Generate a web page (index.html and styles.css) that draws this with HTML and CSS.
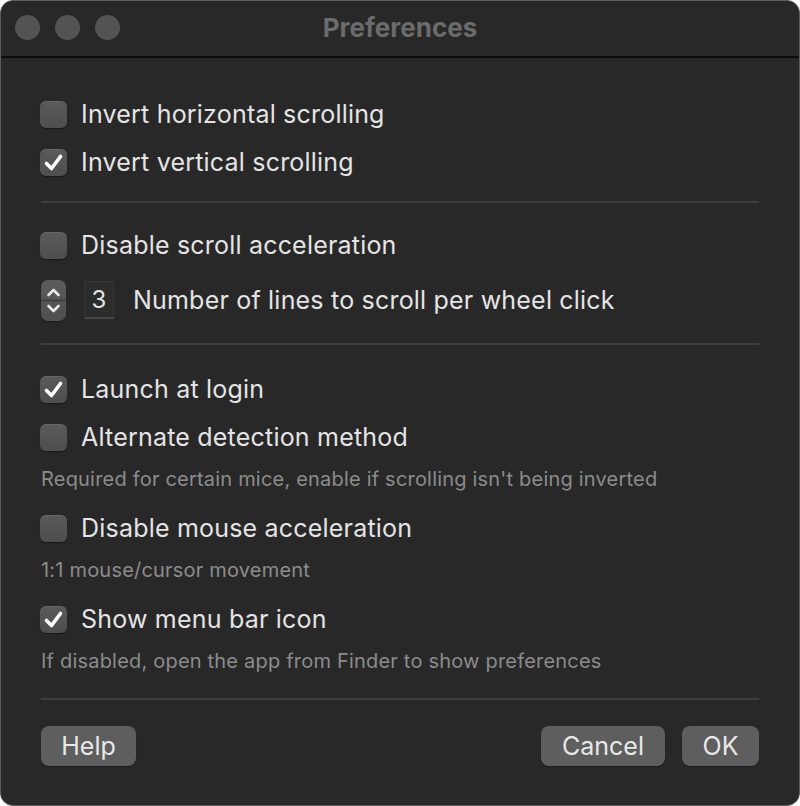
FILE: index.html
```html
<!DOCTYPE html>
<html lang="en">
<head>
    <meta charset="UTF-8">
    <meta name="viewport" content="width=device-width, initial-scale=1.0">
    <title>Preferences</title>
    <link rel="stylesheet" href="styles.css">
</head>
<body>
    <div class="window">
        <div class="titlebar">
            <div class="lights">
                <span class="light"></span>
                <span class="light"></span>
                <span class="light"></span>
            </div>
            <div class="title">Preferences</div>
        </div>

        <div class="content">
            <div class="section first">
                <label class="row">
                    <span class="box"></span>
                    <span class="label">Invert horizontal scrolling</span>
                </label>
                <label class="row">
                    <span class="box checked">
                        <svg viewBox="0 0 27 27" width="27" height="27"><path d="M6.5 14.5 L11.5 19.5 L20.5 7.5" /></svg>
                    </span>
                    <span class="label">Invert vertical scrolling</span>
                </label>
            </div>

            <hr class="sep">

            <div class="section">
                <label class="row">
                    <span class="box"></span>
                    <span class="label">Disable scroll acceleration</span>
                </label>
                <div class="row stepper-row">
                    <span class="stepper">
                        <svg viewBox="0 0 25 41" width="25" height="41">
                            <path class="chev" d="M7.5 15 L12.5 10 L17.5 15" />
                            <line class="mid" x1="0" y1="20.5" x2="25" y2="20.5" />
                            <path class="chev" d="M7.5 26 L12.5 31 L17.5 26" />
                        </svg>
                    </span>
                    <span class="number">3</span>
                    <span class="label">Number of lines to scroll per wheel click</span>
                </div>
            </div>

            <hr class="sep second">

            <div class="section">
                <label class="row">
                    <span class="box checked">
                        <svg viewBox="0 0 27 27" width="27" height="27"><path d="M6.5 14.5 L11.5 19.5 L20.5 7.5" /></svg>
                    </span>
                    <span class="label">Launch at login</span>
                </label>
                <label class="row">
                    <span class="box"></span>
                    <span class="label">Alternate detection method</span>
                </label>
                <p class="hint">Required for certain mice, enable if scrolling isn't being inverted</p>
                <label class="row">
                    <span class="box"></span>
                    <span class="label">Disable mouse acceleration</span>
                </label>
                <p class="hint">1:1 mouse/cursor movement</p>
                <label class="row">
                    <span class="box checked">
                        <svg viewBox="0 0 27 27" width="27" height="27"><path d="M6.5 14.5 L11.5 19.5 L20.5 7.5" /></svg>
                    </span>
                    <span class="label">Show menu bar icon</span>
                </label>
                <p class="hint">If disabled, open the app from Finder to show preferences</p>
            </div>

            <hr class="sep last">

            <div class="buttons">
                <button type="button" class="btn help">Help</button>
                <div class="right">
                    <button type="button" class="btn cancel">Cancel</button>
                    <button type="button" class="btn ok">OK</button>
                </div>
            </div>
        </div>
    </div>
</body>
</html>
```

FILE: styles.css
```css
html, body {
    margin: 0;
    padding: 0;
    background: #ffffff;
}
body {
    font-family: Inter, 'Noto Sans', sans-serif;
    width: 800px;
    height: 806px;
    overflow: hidden;
}
.window {
    box-sizing: border-box;
    width: 800px;
    height: 806px;
    background: #282828;
    border: 1px solid #5c5c5c;
    border-radius: 13px;
    overflow: hidden;
}
.titlebar {
    position: relative;
    height: 55px;
    border-bottom: 2px solid #0c0c0c;
    display: flex;
    align-items: center;
    justify-content: center;
}
.lights {
    position: absolute;
    left: 14px;
    top: 14px;
    display: flex;
    gap: 15px;
}
.light {
    width: 25px;
    height: 25px;
    border-radius: 50%;
    background: #545454;
}
.title {
    color: #6b6b6b;
    font-size: 26px;
    font-weight: 700;
    margin-top: -2px;
}
.content {
    padding: 0 39px;
}
.section.first {
    padding-top: 32px;
}
.row {
    display: flex;
    align-items: center;
    height: 48px;
}
.box {
    box-sizing: border-box;
    width: 27px;
    height: 27px;
    border-radius: 6px;
    background: linear-gradient(#5a5a5a, #4e4e4e);
    box-shadow: inset 0 1px 0 rgba(255, 255, 255, 0.08), 0 1px 1px rgba(0, 0, 0, 0.4);
    flex-shrink: 0;
}
.box svg {
    display: block;
}
.box svg path {
    fill: none;
    stroke: #ffffff;
    stroke-width: 3.6;
    stroke-linecap: round;
    stroke-linejoin: round;
}
.label {
    margin-left: 14px;
    color: #e4e4e4;
    font-size: 25px;
    letter-spacing: 0.2px;
}
.sep {
    border: none;
    height: 2px;
    background: #3d3d3d;
    margin: 15px 1px 18px;
}
.sep.second {
    margin-bottom: 20px;
}
.sep.last {
    margin: 12px 1px 26px;
}
.stepper-row {
    height: 56px;
    margin-top: 3px;
    margin-bottom: 1px;
}
.stepper {
    width: 25px;
    height: 41px;
    border-radius: 7px;
    background: linear-gradient(#5c5c5c, #4f4f4f);
    box-shadow: 0 1px 1px rgba(0, 0, 0, 0.4);
    margin-left: 1px;
}
.stepper svg {
    display: block;
}
.stepper .chev {
    fill: none;
    stroke: #e8e8e8;
    stroke-width: 2.6;
    stroke-linecap: round;
    stroke-linejoin: round;
}
.stepper .mid {
    stroke: #3c3c3c;
    stroke-width: 1.5;
}
.number {
    box-sizing: border-box;
    width: 30px;
    height: 38px;
    margin-left: 18px;
    background: #2c2c2c;
    border: 1px solid #363636;
    border-bottom: 2px solid #474747;
    color: #e4e4e4;
    font-size: 24px;
    display: flex;
    align-items: center;
    justify-content: center;
}
.stepper-row .label {
    margin-left: 19px;
}
.hint {
    margin: 0;
    padding: 5px 0 12px 1px;
    line-height: 26px;
    color: #8c8c8c;
    font-size: 20px;
    letter-spacing: 0.2px;
}
.buttons {
    display: flex;
    justify-content: space-between;
    padding: 0 1px;
}
.right {
    display: flex;
    gap: 17px;
}
.btn {
    font-family: Inter, 'Noto Sans', sans-serif;
    height: 40px;
    border: none;
    border-radius: 8px;
    background: #5e5e5e;
    color: #e8e8e8;
    font-size: 25px;
    padding: 0;
    box-shadow: 0 1px 1px rgba(0, 0, 0, 0.35);
}
.help {
    width: 95px;
}
.cancel {
    width: 124px;
}
.ok {
    width: 77px;
}
```
